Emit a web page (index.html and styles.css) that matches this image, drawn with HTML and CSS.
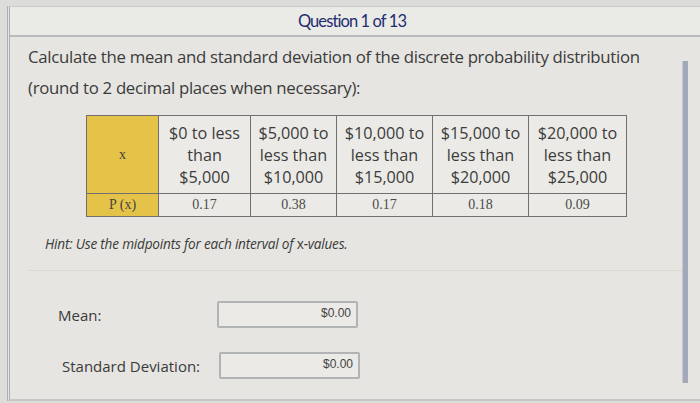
FILE: index.html
```html
<!DOCTYPE html>
<html>
<head>
<meta charset="utf-8">
<link rel="stylesheet" href="styles.css">
</head>
<body>
<div class="screen">
  <div class="frame">
    <div class="qhead">Question 1 of 13</div>
    <div class="body">
      <div class="content">
        <p class="prompt">Calculate the mean and standard deviation of the discrete probability distribution<br>(round to 2 decimal places when necessary):</p>
        <table class="dist">
          <tr class="xrow">
            <th class="lab">x</th>
            <td>$0 to less<br>than<br>$5,000</td>
            <td>$5,000 to<br>less than<br>$10,000</td>
            <td>$10,000 to<br>less than<br>$15,000</td>
            <td>$15,000 to<br>less than<br>$20,000</td>
            <td>$20,000 to<br>less than<br>$25,000</td>
          </tr>
          <tr class="prow">
            <th class="lab">P (x)</th>
            <td>0.17</td>
            <td>0.38</td>
            <td>0.17</td>
            <td>0.18</td>
            <td>0.09</td>
          </tr>
        </table>
        <p class="hint">Hint: Use the midpoints for each interval of <span class="xv">x</span>-values.</p>
        <div class="sep"></div>
        <div class="field mean">
          <span class="flabel">Mean:</span>
          <span class="box">$0.00</span>
        </div>
        <div class="field sd">
          <span class="flabel">Standard Deviation:</span>
          <span class="box">$0.00</span>
        </div>
      </div>
      <div class="rail"></div>
    </div>
  </div>
</div>
</body>
</html>
```
FILE: styles.css
```css
html, body {
  margin: 0;
  padding: 0;
}
body {
  width: 700px;
  height: 403px;
  overflow: hidden;
  background: #dcdcd9;
  font-family: "Open Sans", "Liberation Sans", sans-serif;
  color: #3a3a3a;
}
.screen {
  padding: 6px 0 0 7px;
}
.frame {
  border-left: 3px double #a9adb5;
  border-top: 1px solid #c9cacb;
  background: #e6e5e1;
  height: 392px;
  border-bottom: 2px solid #c4c5c6;
}
.qhead {
  height: 28px;
  line-height: 28px;
  background: #eaeae7;
  border-bottom: 2px solid #b9bbbf;
  text-align: center;
  font-family: Lato, "Open Sans", sans-serif;
  font-size: 16.5px;
  letter-spacing: -0.9px;
  color: #1f2d70;
  padding-right: 6px;
}
.body {
  display: flex;
  height: 362px;
}
.content {
  flex: 1;
  padding: 4px 0 0 18px;
}
.rail {
  width: 5px;
  margin: 24px 12px 16px 0;
  background: #a3a9b8;
  border-left: 1px solid #c4c8d0;
}
.prompt {
  margin: 0;
  font-size: 16.8px;
  line-height: 31px;
  color: #3b3b3b;
  letter-spacing: -0.3px;
}
.dist {
  border-collapse: collapse;
  margin: 12px 0 0 58px;
  background: #ebeae6;
}
.dist td, .dist th {
  border: 1px solid #6f6f6f;
  text-align: center;
  padding: 0;
}
.xrow td, .xrow th {
  font-size: 16.2px;
  line-height: 22px;
  height: 77px;
  color: #3c3c3c;
}
.dist td:nth-child(2) { width: 91px; }
.dist td:nth-child(3) { width: 85px; }
.dist td:nth-child(4) { width: 95px; }
.dist td:nth-child(5) { width: 95px; }
.dist td:nth-child(6) { width: 97px; }
.dist .lab {
  width: 71px;
  background: #e5c348;
  font-family: "Liberation Serif", serif;
  font-weight: normal;
  font-size: 14px;
  color: #444;
}
.prow td, .prow th {
  height: 22px;
  line-height: 18px;
  font-family: "Liberation Serif", serif;
  font-size: 14px;
  color: #4a4a4a;
}
.hint {
  margin: 17px 0 0 17px;
  font-style: italic;
  font-size: 13.6px;
  color: #3a3a3a;
  letter-spacing: -0.2px;
}
.xv {
  font-style: normal;
}
.sep {
  margin: 17px 0 0 0;
  height: 1px;
  background: #d8d7d2;
}
.field {
  display: flex;
  align-items: center;
  height: 27px;
}
.mean {
  margin-top: 30px;
  padding-left: 30px;
}
.sd {
  margin-top: 24px;
  padding-left: 34px;
}
.flabel {
  font-size: 15px;
  color: #3a3a3a;
}
.mean .flabel { width: 159px; }
.sd .flabel { width: 157px; }
.box {
  box-sizing: border-box;
  width: 141px;
  height: 27px;
  border: 2px solid #b2b3b4;
  border-radius: 2px;
  background: #ebeae6;
  text-align: right;
  padding: 3px 5px 0 0;
  font-family: "Liberation Sans", sans-serif;
  font-size: 12px;
  color: #444;
}
```
